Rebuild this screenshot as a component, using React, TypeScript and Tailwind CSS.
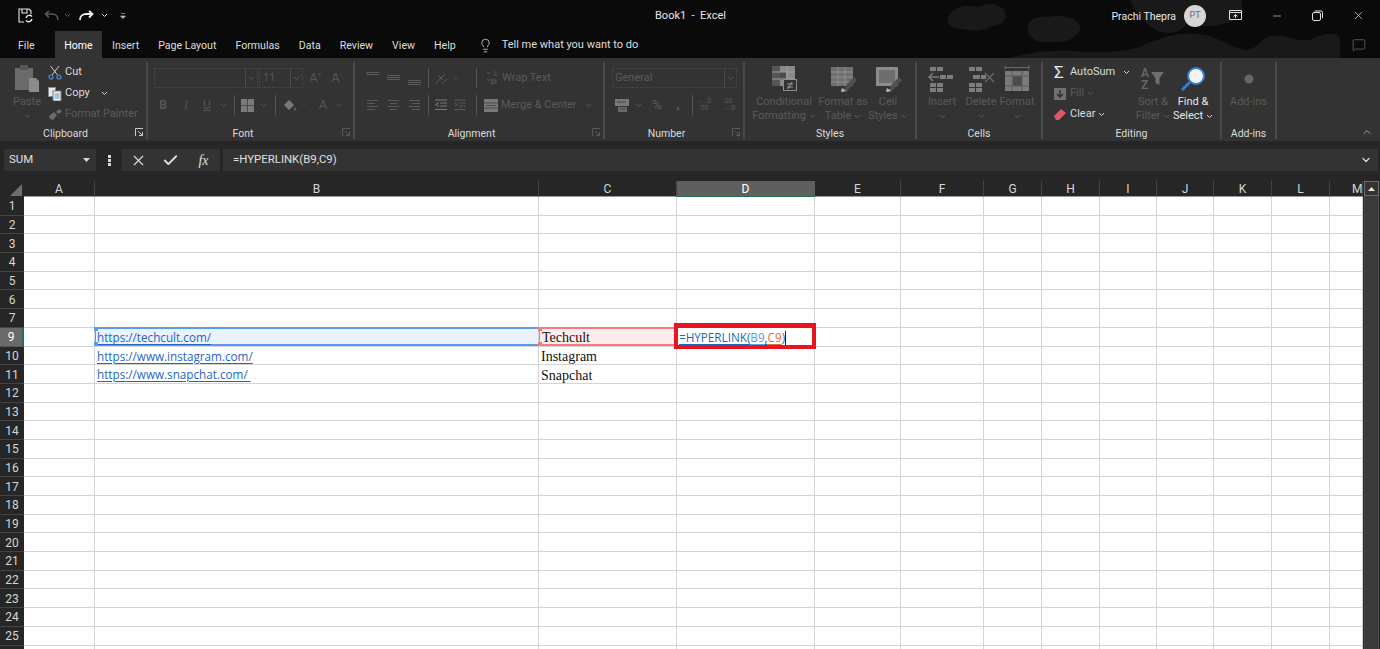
import React from 'react';
import { X, Check, ChevronDown, ChevronUp, Lightbulb, Minus, MessageSquare } from 'lucide-react';

const DIM = '#5a5a5a';
const columns = ['A', 'B', 'C', 'D', 'E', 'F', 'G', 'H', 'I', 'J', 'K', 'L', 'M'];
// row 8 is not on the sheet in the picture
const rows = [1, 2, 3, 4, 5, 6, 7, 9, 10, 11, 12, 13, 14, 15, 16, 17, 18, 19, 20, 21, 22, 23, 24, 25, 26];
const tabs = ['Insert', 'Page Layout', 'Formulas', 'Data', 'Review', 'View', 'Help'];

function Chev({ dim = false, className = '' }: { dim?: boolean; className?: string }) {
  return (
    <svg width="7" height="5" viewBox="0 0 7 5" className={className}>
      <path d="M1 1l2.500 2.500L6 1" fill="none" stroke={dim ? DIM : '#d8d8d8'} strokeWidth="1" />
    </svg>
  );
}

function Launcher({ dim = false }: { dim?: boolean }) {
  const c = dim ? DIM : '#c8c8c8';
  return (
    <svg width="9" height="9" viewBox="0 0 9 9">
      <path d="M.5 8V.5H8M3 3l4.500 4.500M7.500 4v3.500H4" fill="none" stroke={c} strokeWidth="1" />
    </svg>
  );
}

function Sep({ className = 'h-[20px]' }: { className?: string }) {
  return <div className={`w-px bg-[#555555] ${className}`} />;
}

function Lines({ ys, x = [[0, 13]] }: { ys: number[]; x?: number[][] }) {
  return (
    <svg width="14" height="14" viewBox="0 0 14 14">
      {ys.map((y, i) => {
        const [a, b] = x[i % x.length];
        return <path key={y} d={`M${a} ${y + 0.5}H${b}`} stroke={DIM} strokeWidth="1" />;
      })}
    </svg>
  );
}

function Group({ className, label, launcher, dimLauncher, children }: {
  className: string;
  label: string;
  launcher?: boolean;
  dimLauncher?: boolean;
  children: React.ReactNode;
}) {
  return (
    <div className={`flex flex-col border-r-2 border-[#4a4a4a] ${className}`}>
      <div className="h-[64px]">{children}</div>
      <div className="flex h-[13px] items-center text-[10.5px] leading-none text-[#dcdcdc]">
        <div className="flex-1 pt-[3px] text-center">{label}</div>
        {launcher && (
          <div className="flex w-[15px] items-center justify-end pr-[2px]">
            <Launcher dim={dimLauncher} />
          </div>
        )}
      </div>
    </div>
  );
}

function Large({ className, icon, l1, l2, dim = true, chev = false }: {
  className: string;
  icon: React.ReactNode;
  l1: string;
  l2?: string;
  dim?: boolean;
  chev?: boolean;
}) {
  return (
    <div className={`flex shrink-0 flex-col items-center text-[11px] leading-[14px] whitespace-nowrap ${className} ${dim ? 'text-[#5a5a5a]' : 'text-[#e6e6e6]'}`}>
      <div className="flex h-[33px] items-center justify-center">{icon}</div>
      <div className="h-[14px]">{l1}</div>
      <div className="flex h-[14px] items-center gap-[3px]">
        {l2}
        {chev && <Chev dim={dim} />}
      </div>
    </div>
  );
}

function Cell({ className, children }: { className: string; children: React.ReactNode }) {
  return <div className={`flex shrink-0 items-center justify-center ${className}`}>{children}</div>;
}

function Scissors() {
  return (
    <svg width="14" height="14" viewBox="0 0 14 14" fill="none">
      <path d="M2.500 0l7 9M11 0L4 9" stroke="#cfcfcf" strokeWidth="1" />
      <circle cx="3" cy="11" r="2" stroke="#4a90d9" strokeWidth="1.2" />
      <circle cx="11" cy="11" r="2" stroke="#4a90d9" strokeWidth="1.2" />
    </svg>
  );
}

function CopyIcon() {
  return (
    <svg width="14" height="14" viewBox="0 0 14 14">
      <rect x="0.5" y="0.5" width="7" height="9" fill="#e8e8e8" stroke="#8a8a8a" />
      <rect x="5" y="4" width="8" height="10" fill="#f4f4f4" stroke="#777777" />
      <path d="M6.500 7h5M6.500 9h5M6.500 11h5" stroke="#4a90d9" strokeWidth="1" />
    </svg>
  );
}

function PasteIcon() {
  return (
    <svg width="26" height="28" viewBox="0 0 26 28">
      <rect x="1" y="3" width="18" height="22" fill="#6b6b6b" />
      <rect x="6" y="0" width="8" height="5" fill="#565656" />
      <path d="M15 13h7l3 3v11H15z" fill="#8c8c8c" />
    </svg>
  );
}

function TableIcon({ brush = false, fill = false }: { brush?: boolean; fill?: boolean }) {
  return (
    <svg width="28" height="27" viewBox="0 0 28 27">
      <rect x="2" y="2" width="22" height="19" fill={fill ? '#8c8c8c' : '#707070'} />
      {!fill && <path d="M2 7h22M2 12h22M2 17h22M9 2v19M16 2v19" stroke="#8f8f8f" strokeWidth="1" />}
      {fill && <rect x="5" y="5" width="16" height="13" fill="#6e6e6e" />}
      {brush && <path d="M25 12l3 3-8 9-3 3-5-1 4-3 2-4z" fill="#4f4f4f" />}
      {brush && <path d="M13 23l4 3-5 1z" fill="#bdbdbd" />}
    </svg>
  );
}

function CondIcon() {
  return (
    <svg width="28" height="27" viewBox="0 0 28 27">
      <rect x="2" y="1" width="23" height="20" fill="#8a8a8a" />
      <rect x="2" y="1" width="8" height="20" fill="#555555" />
      <rect x="10" y="7" width="6" height="8" fill="#4c4c4c" />
      <path d="M17 1v20M2 7h23M2 14h23" stroke="#a0a0a0" strokeWidth="1" />
      <rect x="13.500" y="14.500" width="13" height="11" fill="#333333" stroke="#8d8d8d" />
      <path d="M17 19h6M17 22h6M22 17l-4 7" stroke="#9a9a9a" strokeWidth="1" />
    </svg>
  );
}

function CellOp({ kind }: { kind: 'insert' | 'delete' | 'format' }) {
  if (kind === 'format') {
    return (
      <svg width="26" height="28" viewBox="0 0 26 28">
        <path d="M1 .5v4M25 .5v4M1 2.500h24" stroke="#6a6a6a" strokeWidth="1" />
        <rect x="1" y="6" width="24" height="20" fill="#7b7b7b" />
        <rect x="9" y="11" width="9" height="10" fill="#4b4b4b" />
        <path d="M1 11h24M1 21h24M8 6v20M18 6v20" stroke="#5a5a5a" strokeWidth="1" />
      </svg>
    );
  }
  return (
    <svg width="28" height="26" viewBox="0 0 28 26">
      <rect x="2" y="1" width="6" height="4" fill="#7d7d7d" />
      <rect x="9" y="1" width="6" height="4" fill="#7d7d7d" />
      <rect x="2" y="17" width="6" height="4" fill="#7d7d7d" />
      <rect x="9" y="17" width="6" height="4" fill="#7d7d7d" />
      <rect x="2" y="22" width="6" height="4" fill="#7d7d7d" />
      <rect x="9" y="22" width="6" height="4" fill="#7d7d7d" />
      {kind === 'insert' ? (
        <>
          <rect x="12" y="9" width="6" height="4" fill="#7d7d7d" />
          <rect x="19" y="9" width="6" height="4" fill="#7d7d7d" />
          <path d="M11 11H1M5 7l-4 4 4 4" fill="none" stroke="#7d7d7d" strokeWidth="1.4" />
        </>
      ) : (
        <>
          <rect x="6" y="9" width="7" height="4" fill="#7d7d7d" />
          <rect x="14" y="9" width="5" height="4" fill="#7d7d7d" />
          <path d="M18 7l9 9M27 7l-9 9" stroke="#6b6b6b" strokeWidth="1.2" />
        </>
      )}
    </svg>
  );
}

function Clouds() {
  return (
    <svg className="pointer-events-none absolute top-0 left-[940px]" width="440" height="58" viewBox="0 0 440 58">
      <g fill="#191919">
        <path d="M8 18c3-10 16-14 30-11 10-5 24-3 27 5 3 8-4 14-14 14-6 5-20 6-28 3-9 1-17-4-15-11z" />
        <path d="M88 30c-2-9 8-15 20-13 12-3 30 0 32 9 1 10-12 17-26 16-14 2-25-2-26-12z" />
        <path d="M190 0h112c2 12-4 22-20 24-8 3-24 2-36 1-6 8-18 10-28 6-10-4-26-22-28-31z" />
        <path d="M70 58c20-6 40-8 62-7 24 2 44 2 64-3 16-6 40-18 64-14 18 2 30 14 46 16 14-1 14-14 28-14 14-2 22 6 36 4 10-4 20-10 30-3v21z" />
      </g>
    </svg>
  );
}

function TitleBar() {
  return (
    <div className="relative z-10 flex h-[31px] items-center text-[#e8e8e8]">
      <div className="ml-[18px] flex items-center">
        <svg width="16" height="16" viewBox="0 0 16 16" fill="none" stroke="#e8e8e8" strokeWidth="1.1">
          <path d="M6 14H1V1h10l2 2v3" />
          <path d="M4 1v4h5V1" />
          <path d="M8 10a3.500 3.500 0 0 1 6-1.500M14 11a3.500 3.500 0 0 1-6 1.500" strokeWidth="1.4" />
        </svg>
        <svg className="ml-[10px]" width="15" height="12" viewBox="0 0 15 12" fill="none" stroke={DIM} strokeWidth="1.6">
          <path d="M14 10c0-4-3-6-6-6H2M5 1L1.500 4 5 7.500" />
        </svg>
        <Chev dim className="ml-[5px]" />
        <svg className="ml-[8px]" width="15" height="12" viewBox="0 0 15 12" fill="none" stroke="#f0f0f0" strokeWidth="1.8">
          <path d="M1 10c0-4 3-6 6-6h6M10 1l3.500 3L10 7.500" />
        </svg>
        <Chev className="ml-[7px]" />
        <svg className="ml-[12px]" width="6" height="7" viewBox="0 0 6 7">
          <path d="M1 1.500h4M.5 4l2.500 2.500L5.500 4z" fill="#bbbbbb" stroke="#bbbbbb" strokeWidth=".6" />
        </svg>
      </div>
      <div className="absolute left-[655px] pt-[2px] text-[11px]">Book1&nbsp; - &nbsp;Excel</div>
      <div className="ml-auto flex items-center">
        <span className="pt-[2px] text-[10.5px]">Prachi Thepra</span>
        <div className="ml-[8px] flex h-[22px] w-[22px] items-center justify-center rounded-full bg-[#d6d6d6] text-[9px] text-[#6b6b6b]">PT</div>
        <svg className="ml-[23px]" width="13" height="11" viewBox="0 0 13 11" fill="none" stroke="#e0e0e0" strokeWidth="1">
          <path d="M.5.500h12v9H.5zM.5 2.500h12M6.500 8V4.500M4.500 6.500l2-2 2 2" />
        </svg>
        <Minus size={12} strokeWidth={1.2} className="ml-[29px] text-[#e0e0e0]" />
        <svg className="ml-[29px]" width="11" height="11" viewBox="0 0 11 11" fill="none" stroke="#e0e0e0" strokeWidth="1">
          <rect x=".5" y="2.500" width="8" height="8" rx="1.500" />
          <path d="M2.500 1h6.500a1.500 1.500 0 0 1 1.500 1.500V8" />
        </svg>
        <X size={13} strokeWidth={1.2} className="mr-[15px] ml-[29px] text-[#e8e8e8]" />
      </div>
    </div>
  );
}

function TabRow() {
  return (
    <div className="relative z-10 flex h-[27px] items-center text-[10.6px] text-[#dedede]">
      <div className="ml-[18px] w-[37px] pt-[2px]">File</div>
      <div className="flex h-full w-[47px] items-center justify-center bg-[#333333] pt-[2px] text-white">Home</div>
      <div className="ml-[10px] flex items-center gap-[19px] pt-[2px]">
        {tabs.map((t) => (
          <span key={t}>{t}</span>
        ))}
      </div>
      <Lightbulb size={15} strokeWidth={1.2} className="mt-px ml-[22px] text-[#e4e4e4]" />
      <span className="ml-[9px] pt-[2px] text-[11px]">Tell me what you want to do</span>
      <MessageSquare size={14} strokeWidth={1} className="mr-[14px] ml-auto text-[#8a8a8a]" />
    </div>
  );
}

function Ribbon() {
  const dimText = 'text-[#5a5a5a]';
  return (
    <div className="flex h-[83px] bg-[#333333] pt-[4px] pb-[2px] text-[11px] text-[#dcdcdc]">
      <Group className="w-[148px]" label="Clipboard" launcher>
        <div className="flex">
          <Large className="ml-[12px] w-[30px]" icon={<PasteIcon />} l1="Paste" chev />
          <div className="ml-[6px]">
            <div className="flex h-[21px] items-center gap-[3px]"><Scissors /><span>Cut</span></div>
            <div className="flex h-[21px] items-center gap-[3px]"><CopyIcon /><span>Copy</span><Chev className="ml-[8px]" /></div>
            <div className={`flex h-[21px] items-center gap-[3px] ${dimText}`}>
              <svg width="14" height="12" viewBox="0 0 14 12"><path d="M1 7l5-4 3 3-4 5-3-1zM8 3l3-3 3 2-3 3z" fill="#6a6a6a" /></svg>
              <span>Format Painter</span>
            </div>
          </div>
        </div>
      </Group>

      <Group className="w-[207px]" label="Font" launcher dimLauncher>
        <div className="flex flex-col pt-[6px] pl-[6px] text-[#555555]">
          <div className="flex h-[20px] items-center">
            <div className="flex h-full w-[104px] justify-end border border-dotted border-[#4a4a4a]">
              <div className="flex w-[12px] items-center justify-center border-l border-[#4a4a4a]"><Chev dim /></div>
            </div>
            <div className="ml-px flex h-full w-[44px] items-center justify-between border border-dotted border-[#4a4a4a] pl-[3px] text-[11px]">
              11
              <div className="flex h-full w-[12px] items-center justify-center border-l border-[#4a4a4a]"><Chev dim /></div>
            </div>
            <Cell className="ml-[2px] w-[21px] text-[13px]">A<sup className="text-[7px]">+</sup></Cell>
            <Cell className="w-[21px] text-[13px]">A<sup className="text-[7px]">-</sup></Cell>
          </div>
          <div className="mt-[7px] flex h-[20px] items-center text-[12px]">
            <Cell className="w-[18px] font-bold">B</Cell>
            <Cell className="w-[28px] font-['Liberation_Serif'] italic">I</Cell>
            <Cell className="w-[14px] underline">U</Cell>
            <Cell className="w-[18px]"><Chev dim /></Cell>
            <Sep className="ml-[2px] h-[20px]" />
            <Cell className="w-[24px]">
              <svg width="13" height="13" viewBox="0 0 13 13"><rect width="13" height="13" fill="#7a7a7a" /><path d="M6.500 0v13M0 6.500h13" stroke="#4b4b4b" /></svg>
            </Cell>
            <Cell className="w-[8px]"><Chev dim /></Cell>
            <Sep className="ml-[8px] h-[20px]" />
            <Cell className="w-[26px]">
              <svg width="13" height="12" viewBox="0 0 13 12"><path d="M1 6l5-5 5 5-5 5z" fill="#787878" /><path d="M12 8l1 3h-2z" fill="#787878" /></svg>
            </Cell>
            <Cell className="w-[4px]"><Chev dim /></Cell>
            <Cell className="ml-[4px] w-[26px] text-[13px]">A</Cell>
            <Cell className="w-[6px]"><Chev dim /></Cell>
          </div>
        </div>
      </Group>

      <Group className="w-[250px]" label="Alignment" launcher dimLauncher>
        <div className="flex flex-col pt-[6px] pl-[7px] text-[#5a5a5a]">
          <div className="flex h-[20px] items-center">
            <Cell className="w-[21px]"><Lines ys={[1, 3]} /></Cell>
            <Cell className="w-[21px]"><Lines ys={[4, 6, 8]} /></Cell>
            <Cell className="w-[21px]"><Lines ys={[9, 11, 13]} /></Cell>
            <Sep className="ml-[3px] h-[20px]" />
            <Cell className="w-[24px]">
              <svg width="14" height="13" viewBox="0 0 14 13" fill="none" stroke={DIM}><path d="M1 12L11 2M4 3l5 5M8 12l5-5" /></svg>
            </Cell>
            <Cell className="w-[6px]"><Chev dim /></Cell>
            <Sep className="ml-[17px] h-[20px]" />
            <Cell className="ml-[8px] w-[14px]">
              <svg width="12" height="14" viewBox="0 0 12 14" fill="none" stroke={DIM}><path d="M1 9h9v3H6M7 10l-2 2 2 2" /><path d="M1 2h3M8 1h3M8 4h3" /></svg>
            </Cell>
            <span className="ml-[3px]">Wrap Text</span>
          </div>
          <div className="mt-[7px] flex h-[20px] items-center">
            <Cell className="w-[21px]"><Lines ys={[2, 5, 8, 11]} x={[[1, 12], [1, 9]]} /></Cell>
            <Cell className="w-[21px]"><Lines ys={[2, 5, 8, 11]} x={[[1, 12], [3, 10]]} /></Cell>
            <Cell className="w-[21px]"><Lines ys={[2, 5, 8, 11]} x={[[1, 12], [4, 12]]} /></Cell>
            <Sep className="ml-[3px] h-[20px]" />
            <Cell className="w-[24px]">
              <svg width="14" height="12" viewBox="0 0 14 12" fill="none" stroke="#7a7a7a"><path d="M1 1h12M6 4h7M6 7h7M1 10.500h12M5 3.500L1.500 5.500 5 7.500" /></svg>
            </Cell>
            <Cell className="w-[14px]">
              <svg width="14" height="12" viewBox="0 0 14 12" fill="none" stroke={DIM}><path d="M1 1h12M6 4h7M6 7h7M1 10.500h12M1 3.500l3.500 2-3.500 2" /></svg>
            </Cell>
            <Sep className="ml-[9px] h-[20px]" />
            <Cell className="ml-[7px] w-[14px]">
              <svg width="14" height="13" viewBox="0 0 14 13"><rect width="14" height="13" fill="#787878" /><path d="M0 4h14M0 9h14M2 6.500h10" stroke="#4c4c4c" /></svg>
            </Cell>
            <span className="ml-[3px] whitespace-nowrap pt-px">Merge &amp; Center</span>
            <Chev dim className="ml-[8px]" />
          </div>
        </div>
      </Group>

      <Group className="w-[140px]" label="Number" launcher dimLauncher>
        <div className="flex flex-col pt-[6px] pl-[7px] text-[#5a5a5a]">
          <div className="flex h-[20px] w-[125px] items-center justify-between border border-dotted border-[#4a4a4a] pl-[2px]">
            General
            <div className="flex h-full w-[12px] items-center justify-center border-l border-[#4a4a4a]"><Chev dim /></div>
          </div>
          <div className="mt-[7px] flex h-[20px] items-center">
            <Cell className="w-[20px]">
              <svg width="14" height="14" viewBox="0 0 14 14"><rect y="1" width="14" height="7" fill="#7a7a7a" /><rect x="3" y="9" width="9" height="5" fill="#6a6a6a" /><path d="M2 4h9M5 11h5" stroke="#444444" /></svg>
            </Cell>
            <Cell className="w-[12px]"><Chev dim /></Cell>
            <Cell className="w-[26px] text-[13px]">%</Cell>
            <Cell className="w-[16px] text-[13px] font-bold">,</Cell>
            <Sep className="ml-[6px] h-[20px]" />
            <Cell className="w-[24px] text-[7px] leading-[7px]"><span>←.0<br />.00</span></Cell>
            <Cell className="w-[24px] text-[7px] leading-[7px]"><span>.00<br />→.0</span></Cell>
          </div>
        </div>
      </Group>

      <Group className="w-[172px]" label="Styles">
        <div className="flex pl-[10px]">
          <Large className="w-[58px]" icon={<CondIcon />} l1="Conditional" l2="Formatting" chev />
          <Large className="w-[60px]" icon={<TableIcon brush />} l1="Format as" l2="Table" chev />
          <Large className="w-[30px]" icon={<TableIcon brush fill />} l1="Cell" l2="Styles" chev />
        </div>
      </Group>

      <Group className="w-[126px]" label="Cells">
        <div className="flex pl-[7px]">
          <Large className="w-[36px]" icon={<CellOp kind="insert" />} l1="Insert" chev />
          <Large className="w-[42px]" icon={<CellOp kind="delete" />} l1="Delete" chev />
          <Large className="w-[30px]" icon={<CellOp kind="format" />} l1="Format" chev />
        </div>
      </Group>

      <Group className="w-[179px]" label="Editing">
        <div className="flex pl-[11px]">
          <div className="w-[82px]">
            <div className="flex h-[21px] items-center">
              <span className="w-[16px] text-[17px] leading-none text-[#e8e8e8]">Σ</span>
              <span>AutoSum</span>
              <Chev className="ml-[8px]" />
            </div>
            <div className={`flex h-[21px] items-center ${dimText}`}>
              <svg width="12" height="12" viewBox="0 0 12 12"><rect width="12" height="12" fill="#707070" /><path d="M6 2v7M3 6l3 3 3-3" fill="none" stroke="#2e2e2e" strokeWidth="1.4" /></svg>
              <span className="ml-[4px]">Fill</span>
              <Chev dim className="ml-[3px]" />
            </div>
            <div className="flex h-[21px] items-center">
              <svg width="12" height="11" viewBox="0 0 12 11"><path d="M0 7l7-7 5 4-7 7H2z" fill="#e0566a" /></svg>
              <span className="ml-[4px]">Clear</span>
              <Chev className="ml-[3px]" />
            </div>
          </div>
          <Large
            className="w-[34px]"
            icon={
              <div className="flex items-center font-semibold text-[#666666]">
                <div className="flex flex-col text-[12px] leading-[12px]">
                  <span>A</span>
                  <span>Z</span>
                </div>
                <svg width="14" height="13" viewBox="0 0 14 13" className="ml-[2px]"><path d="M0 0h13L8.500 6v7l-4-2V6z" fill="#6f6f6f" /></svg>
              </div>
            }
            l1="Sort &"
            l2="Filter"
            chev
          />
          <Large
            className="ml-[2px] w-[42px]"
            dim={false}
            icon={
              <svg width="26" height="26" viewBox="0 0 26 26" fill="none">
                <circle cx="16" cy="10" r="8" fill="#f4f4f4" stroke="#2f7fd6" strokeWidth="2" />
                <path d="M10 16l-8 8" stroke="#2f7fd6" strokeWidth="3" />
              </svg>
            }
            l1="Find &"
            l2="Select"
            chev
          />
        </div>
      </Group>

      <Group className="w-[55px]" label="Add-ins">
        <Large
          className="w-full"
          icon={<svg width="10" height="10" viewBox="0 0 10 10"><circle cx="5" cy="5" r="4.500" fill="#666666" /></svg>}
          l1="Add-ins"
        />
      </Group>

      <div className="ml-auto flex items-end pr-[7px] pb-[1px]">
        <ChevronUp size={12} strokeWidth={1.4} className="text-[#cfcfcf]" />
      </div>
    </div>
  );
}

function FormulaBar() {
  return (
    <div className="flex h-[40px] items-start gap-[3px] pt-[8px] pr-[2px] pl-[4px] text-[11.4px] text-[#e0e0e0]">
      <div className="flex h-[22px] w-[92px] items-center justify-between bg-[#333333] pr-[6px] pl-[5px]">
        SUM
        <svg width="7" height="4" viewBox="0 0 7 4"><path d="M0 0h7L3.500 4z" fill="#d8d8d8" /></svg>
      </div>
      <div className="flex h-[22px] w-[20px] items-center justify-center">
        <svg width="3" height="11" viewBox="0 0 3 11" fill="#d8d8d8"><rect width="3" height="3" /><rect y="4" width="3" height="3" /><rect y="8" width="3" height="3" /></svg>
      </div>
      <div className="flex h-[22px] w-[98px] items-center bg-[#333333] text-[#e0e0e0]">
        <Cell className="w-[32px]"><X size={17} strokeWidth={1.6} /></Cell>
        <Cell className="w-[33px]"><Check size={17} strokeWidth={2.6} /></Cell>
        <Cell className="w-[33px] font-['Liberation_Serif'] text-[14px] italic">fx</Cell>
      </div>
      <div className="flex h-[22px] flex-1 items-center justify-between bg-[#333333] pr-[6px] pl-[10px]">
        =HYPERLINK(B9,C9)
        <ChevronDown size={12} strokeWidth={2.4} />
      </div>
    </div>
  );
}

function Handle({ className }: { className: string }) {
  return <div className={`absolute h-[4px] w-[4px] ${className}`} />;
}

function CellBody({ col, row }: { col: string; row: number }) {
  const link = "pt-[2px] font-['Open_Sans'] text-[11.7px] text-[#1f66c2] underline underline-offset-2 decoration-1";
  const serif = "pt-[3px] font-['Liberation_Serif'] text-[14px] text-[#111111]";
  if (row === 9 && col === 'B') {
    return (
      <div className="absolute inset-0 -top-px z-[5] flex items-center border-y-2 border-l border-[#5b9bea] bg-[#e9f2fd] pl-px">
        <span className={`${link} mt-[2px]`}>https://techcult.com/</span>
        <Handle className="-top-[2px] -left-[2px] bg-[#5b9bea]" />
        <Handle className="-bottom-[2px] -left-[2px] bg-[#5b9bea]" />
      </div>
    );
  }
  if (row === 9 && col === 'C') {
    return (
      <div className="absolute inset-0 -top-px z-[5] flex items-center border-y-2 border-l border-[#f27c82] bg-[#fdecec] pl-[2px]">
        <span className={serif}>Techcult</span>
        <Handle className="-top-[2px] -left-[2px] bg-[#f27c82]" />
        <Handle className="-bottom-[2px] -left-[2px] bg-[#f27c82]" />
      </div>
    );
  }
  if (row === 9 && col === 'D') {
    return (
      <div className="absolute -top-[5px] -right-[2px] -bottom-[3px] -left-[3px] z-10 border-4 border-[#e8141f] bg-white">
        <div className="flex h-full items-center border-t border-[#217346] pt-[4px] pl-px font-['Open_Sans'] text-[11.7px]">
          <span className="text-[#1f66c2] underline underline-offset-2 decoration-1">=HYPERLINK(</span>
          <span className="text-[#5b9bea] underline underline-offset-2 decoration-1">B9</span>
          <span className="text-[#1f66c2] underline underline-offset-2 decoration-1">,</span>
          <span className="text-[#e8683a] underline underline-offset-2 decoration-1">C9</span>
          <span className="text-[#1f66c2]">)</span>
          <span className="h-[14px] w-px bg-[#222222]" />
        </div>
      </div>
    );
  }
  if (row === 10 && col === 'B') return <span className={`pl-[2px] ${link}`}>https://www.instagram.com/</span>;
  if (row === 11 && col === 'B') return <span className={`pl-[2px] ${link}`}>https://www.snapchat.com/&nbsp;</span>;
  if (row === 10 && col === 'C') return <span className={`pl-[2px] ${serif}`}>Instagram</span>;
  if (row === 11 && col === 'C') return <span className={`pl-[2px] ${serif}`}>Snapchat</span>;
  return null;
}

function Sheet() {
  return (
    <div className="flex min-h-0 flex-1">
      <div className="grid h-fit w-[1363px] grid-cols-[24px_71px_444px_138px_138px_86px_83px_58px_58px_57px_57px_58px_58px_33px] grid-rows-[16px] auto-rows-[18.7px]">
        <div className="flex h-[16px] items-end justify-end pr-[2px] pb-px">
          <svg width="12" height="12" viewBox="0 0 12 12"><path d="M12 0v12H0z" fill="#6e6e6e" /></svg>
        </div>
        {columns.map((c) => (
          <div
            key={c}
            className={`flex items-center border-r border-b text-[12px] ${c === 'M' ? 'justify-start pl-[22px]' : 'justify-center'} ${c === 'D' ? 'border-r-[#5f5f5f] border-b-[#217346] bg-[#5f5f5f] text-white' : 'border-r-[#444444] border-b-[#9a9a9a] text-[#d6d6d6]'}`}
          >
            {c}
          </div>
        ))}
        {rows.map((r) => (
          <React.Fragment key={r}>
            <div className={`flex items-center justify-center border-b pt-px text-[12px] ${r === 9 ? 'border-r-2 border-b-[#555555] border-r-[#217346] bg-[#6a6a6a] text-white' : 'border-[#444444] bg-[#262626] text-[#d6d6d6]'}`}>
              {r < 26 ? r : ''}
            </div>
            {columns.map((c) => (
              <div key={c} className="relative flex items-center border-r border-b border-[#d4d4d4] bg-white">
                <CellBody col={c} row={r} />
              </div>
            ))}
          </React.Fragment>
        ))}
      </div>
      <div className="flex w-[17px] flex-col items-center">
        <div className="flex h-[15px] w-[15px] items-center justify-center border border-[#6a6a6a] bg-[#333333]">
          <svg width="7" height="4" viewBox="0 0 7 4"><path d="M0 4h7L3.500 0z" fill="#e8e8e8" /></svg>
        </div>
        <div className="w-[15px] flex-1 border-x border-[#4a4a4a] bg-[#3a3a3a]" />
      </div>
    </div>
  );
}

export default function App() {
  return (
    <div className="flex h-[649px] w-[1380px] flex-col overflow-hidden bg-[#262626] font-['Roboto',sans-serif]">
      <div className="relative bg-[#0a0a0a]">
        <Clouds />
        <TitleBar />
        <TabRow />
      </div>
      <Ribbon />
      <FormulaBar />
      <Sheet />
    </div>
  );
}
